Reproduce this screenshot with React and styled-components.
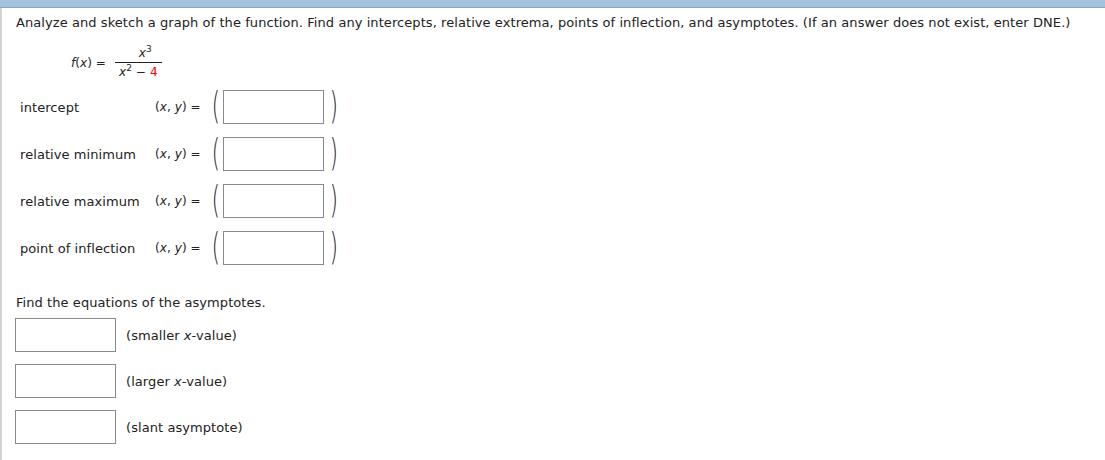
import styled, { createGlobalStyle } from "styled-components";

const Global = createGlobalStyle`
  body {
    margin: 0;
    background: #fff;
    font-family: "DejaVu Sans", Verdana, sans-serif;
    font-size: 13px;
    letter-spacing: 0.07px;
    color: #222;
  }
`;

const Page = styled.div`
  width: 1105px;
  height: 460px;
  overflow: hidden;
  display: flex;
  flex-direction: column;
`;

const TopBar = styled.div`
  height: 7px;
  background: #a4c3df;
  border-bottom: 1px solid #8aa5bf;
`;

const Panel = styled.div`
  flex: 1;
  border-left: 2px solid #d2d2d2;
  padding: 7px 0 0 14px;
`;

const Prompt = styled.p`
  margin: 0;
  line-height: 16px;
`;

const Func = styled.div`
  display: flex;
  align-items: center;
  margin: 15px 0 0 55px;
  font-size: 12px;
`;

const Var = styled.i`
  font-style: italic;
`;

const Frac = styled.span`
  display: inline-flex;
  flex-direction: column;
  align-items: center;
  margin-left: 9px;
`;

const Num = styled.span`
  padding: 0 6px 2px 20px;
  border-bottom: 1px solid #222;
  width: 100%;
  text-align: center;
  box-sizing: border-box;
`;

const Den = styled.span`
  padding: 2px 4px 0;
`;

const Red = styled.span`
  color: #e00;
`;

const Sup = styled.sup`
  font-size: 9px;
  line-height: 0;
`;

const Rows = styled.div`
  display: flex;
  flex-direction: column;
  gap: 13px;
  margin: 11px 0 0 4px;
`;

const Row = styled.div`
  display: flex;
  align-items: center;
  height: 34px;
`;

const Label = styled.span`
  width: 135px;
`;

const Pair = styled.span`
  font-size: 12px;
  width: 54px;
`;

const Paren = styled.span`
  font-size: 38px;
  font-weight: 300;
  line-height: 34px;
  transform: scaleX(0.55);
  color: #222;
  width: 12px;
  text-align: center;
  margin-top: -4px;
`;

const Box = styled.div`
  width: 99px;
  height: 32px;
  border: 1px solid #8a8a8a;
  background: #fff;
  margin: 0 ${(p) => p.$right || 0}px 0 ${(p) => p.$left || 0}px;
`;

const Heading = styled.p`
  margin: 30px 0 0 0;
  line-height: 16px;
`;

const Asym = styled.div`
  display: flex;
  flex-direction: column;
  gap: 12px;
  margin-top: 7px;
`;

const AsymRow = styled.div`
  display: flex;
  align-items: center;
  gap: 10px;
`;

const rows = ["intercept", "relative minimum", "relative maximum", "point of inflection"];
const asymptotes = ["smaller", "larger", null];

export default function App() {
  return (
    <Page>
      <Global />
      <TopBar />
      <Panel>
        <Prompt>
          Analyze and sketch a graph of the function. Find any intercepts, relative extrema, points of
          inflection, and asymptotes. (If an answer does not exist, enter DNE.)
        </Prompt>
        <Func>
          <span>
            <Var>f</Var>(<Var>x</Var>) =
          </span>
          <Frac>
            <Num>
              <Var>x</Var>
              <Sup>3</Sup>
            </Num>
            <Den>
              <Var>x</Var>
              <Sup>2</Sup> − <Red>4</Red>
            </Den>
          </Frac>
        </Func>
        <Rows>
          {rows.map((r) => (
            <Row key={r}>
              <Label>{r}</Label>
              <Pair>
                (<Var>x</Var>, <Var>y</Var>) =
              </Pair>
              <Paren>(</Paren>
              <Box $left={2} $right={3} />
              <Paren>)</Paren>
            </Row>
          ))}
        </Rows>
        <Heading>Find the equations of the asymptotes.</Heading>
        <Asym>
          {asymptotes.map((a) => (
            <AsymRow key={a || "slant"}>
              <Box $left={-1} />
              {a ? (
                <span>
                  ({a} <Var>x</Var>-value)
                </span>
              ) : (
                <span>(slant asymptote)</span>
              )}
            </AsymRow>
          ))}
        </Asym>
      </Panel>
    </Page>
  );
}
